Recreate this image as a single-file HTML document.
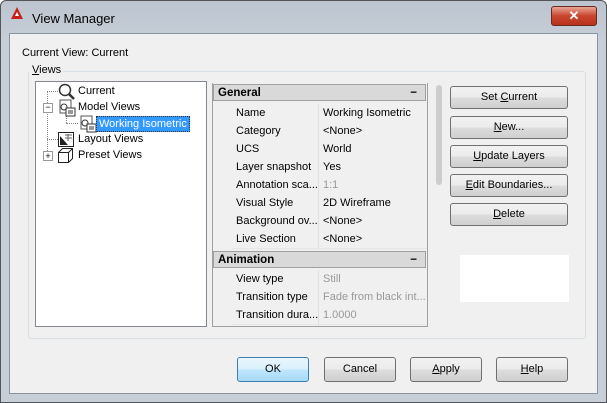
<html><head><style>
body{margin:0;width:607px;height:403px;background:#fff;font-family:"Liberation Sans",sans-serif;font-size:11px;color:#000;position:relative;overflow:hidden}
.a{position:absolute}
.btn{position:absolute;border:1px solid #707070;border-radius:3px;background:linear-gradient(#f2f2f2,#ebebeb 50%,#dddddd 51%,#cfcfcf);text-align:center;line-height:21px;font-size:11px}
.row{position:absolute;left:232px;width:195px;height:18px;border-bottom:1px solid #e6e6e6;background:#f0f0f0}
.row span{position:absolute;top:3px}
.hd{position:absolute;left:213px;width:213px;height:17px;background:#d9d9d9;border:1px solid #a0a0a0;font-weight:bold;font-size:11.5px;line-height:17px;padding-left:4px;box-sizing:border-box}
.hd b{position:absolute;right:8px;top:0}
</style></head><body>
<div class="a" style="left:0;top:0;width:607px;height:403px;background:linear-gradient(#bcc4cf,#c6ced8 40px,#c6ced8);border-radius:6px 6px 0 0;border:1px solid #555;box-sizing:border-box"></div>
<div class="a" style="left:10px;top:6px;width:14px;height:14px"><svg width="14" height="14"><polygon points="7,1 13,13 1,13" fill="#c8211c"/><polygon points="7,6 9,10 5,10" fill="#fff"/></svg></div>
<div class="a" style="left:32px;top:11px;font-size:13px">View Manager</div>
<div class="a" style="left:551px;top:6px;width:44px;height:18px;border-radius:3px;border:1px solid #6a2a20;background:linear-gradient(#e9a594,#c9452e 50%,#b8321c);color:#fff;font-weight:bold;text-align:center;line-height:17px;font-size:13px">✕</div>
<div class="a" style="left:9px;top:33px;width:589px;height:361px;background:#f0f0f0;border:1px solid #8a94a0;box-sizing:border-box"></div>
<div class="a" style="left:22px;top:47px">Current View: Current</div>
<div class="a" style="left:28px;top:71px;width:556px;height:266px;border:1px solid #d5dfe5;border-radius:3px"></div>
<div class="a" style="left:30px;top:64px;background:#f0f0f0;padding:0 2px"><u>V</u>iews</div>
<div class="a" style="left:35px;top:81px;width:172px;height:246px;background:#fff;border:1px solid #828790;box-sizing:border-box"></div>
<div class="a" style="left:47px;top:91px;height:64px;border-left:1px dotted #888"></div>
<div class="a" style="left:47px;top:91px;width:11px;border-top:1px dotted #888"></div>
<div class="a" style="left:47px;top:139px;width:11px;border-top:1px dotted #888"></div>
<div class="a" style="left:66px;top:113px;height:10px;border-left:1px dotted #888"></div>
<div class="a" style="left:66px;top:123px;width:12px;border-top:1px dotted #888"></div>
<div class="a" style="left:43px;top:103px;width:8px;height:8px;border:1px solid #999;background:#fff;font-size:9px;line-height:7px;text-align:center">−</div>
<div class="a" style="left:43px;top:151px;width:8px;height:8px;border:1px solid #999;background:#fff;font-size:9px;line-height:8px;text-align:center">+</div>
<svg class="a" style="left:57px;top:83px" width="20" height="18"><circle cx="8" cy="7" r="5.5" fill="#fff" stroke="#333" stroke-width="1.5"/><line x1="12" y1="11" x2="17" y2="16" stroke="#333" stroke-width="2.5"/></svg>
<svg class="a" style="left:57px;top:99px" width="20" height="18"><rect x="3" y="1" width="11" height="13" fill="#fff" stroke="#555"/><circle cx="7" cy="8" r="3" fill="none" stroke="#333"/><rect x="9" y="9" width="9" height="8" fill="#fff" stroke="#333"/><line x1="11" y1="12" x2="16" y2="12" stroke="#333"/><line x1="11" y1="14" x2="16" y2="14" stroke="#333"/></svg>
<svg class="a" style="left:78px;top:115px" width="20" height="18"><rect x="3" y="1" width="11" height="13" fill="#fff" stroke="#555"/><circle cx="7" cy="8" r="3" fill="none" stroke="#333"/><rect x="9" y="9" width="9" height="8" fill="#fff" stroke="#333"/><line x1="11" y1="12" x2="16" y2="12" stroke="#333"/><line x1="11" y1="14" x2="16" y2="14" stroke="#333"/></svg>
<svg class="a" style="left:57px;top:131px" width="20" height="18"><rect x="1.5" y="1.5" width="15" height="14" fill="#fff" stroke="#222"/><polygon points="3,14 3,5 11,14" fill="#222"/><line x1="8" y1="4" x2="15" y2="4" stroke="#666"/><line x1="8" y1="7" x2="15" y2="7" stroke="#666"/><line x1="11" y1="3" x2="11" y2="10" stroke="#666"/></svg>
<svg class="a" style="left:57px;top:147px" width="20" height="18"><rect x="1.5" y="5.5" width="10" height="10" fill="#fff" stroke="#222"/><polyline points="1.5,5.5 5.5,1.5 15.5,1.5 15.5,11.5 11.5,15.5" fill="none" stroke="#222"/><line x1="11.5" y1="5.5" x2="15.5" y2="1.5" stroke="#222"/></svg>
<div class="a" style="left:78px;top:85px">Current</div>
<div class="a" style="left:78px;top:101px">Model Views</div>
<div class="a" style="left:96px;top:116px;background:#3399ff;color:#fff;padding:1px 2px;border:1px dotted #333">Working Isometric</div>
<div class="a" style="left:78px;top:133px">Layout Views</div>
<div class="a" style="left:78px;top:149px">Preset Views</div>
<div class="a" style="left:212px;top:83px;width:216px;height:244px;background:#f0f0f0;border:1px solid #a0a0a0;border-top:none;box-sizing:border-box"></div>
<div class="hd" style="top:84px">General<b>−</b></div>
<div class="row" style="top:104px"><span style="left:4px">Name</span><span style="left:91px">Working Isometric</span></div>
<div class="row" style="top:122px"><span style="left:4px">Category</span><span style="left:91px">&lt;None&gt;</span></div>
<div class="row" style="top:140px"><span style="left:4px">UCS</span><span style="left:91px">World</span></div>
<div class="row" style="top:158px"><span style="left:4px">Layer snapshot</span><span style="left:91px">Yes</span></div>
<div class="row" style="top:176px"><span style="left:4px">Annotation sca...</span><span style="left:91px;color:#999">1:1</span></div>
<div class="row" style="top:194px"><span style="left:4px">Visual Style</span><span style="left:91px">2D Wireframe</span></div>
<div class="row" style="top:212px"><span style="left:4px">Background ov...</span><span style="left:91px">&lt;None&gt;</span></div>
<div class="row" style="top:230px"><span style="left:4px">Live Section</span><span style="left:91px">&lt;None&gt;</span></div>
<div class="hd" style="top:251px">Animation<b>−</b></div>
<div class="row" style="top:270px"><span style="left:4px">View type</span><span style="left:91px;color:#999">Still</span></div>
<div class="row" style="top:288px"><span style="left:4px">Transition type</span><span style="left:91px;color:#999">Fade from black int...</span></div>
<div class="row" style="top:306px"><span style="left:4px">Transition dura...</span><span style="left:91px;color:#999">1.0000</span></div>
<div class="a" style="left:318px;top:104px;height:144px;border-left:1px solid #e0e0e0"></div>
<div class="a" style="left:318px;top:270px;height:56px;border-left:1px solid #e0e0e0"></div>
<div class="a" style="left:436px;top:85px;width:6px;height:100px;background:#cdcdcd;border-radius:3px"></div>
<div class="btn" style="left:450px;top:86px;width:116px">Set <u>C</u>urrent</div>
<div class="btn" style="left:450px;top:116px;width:116px"><u>N</u>ew...</div>
<div class="btn" style="left:450px;top:145px;width:116px"><u>U</u>pdate Layers</div>
<div class="btn" style="left:450px;top:174px;width:116px"><u>E</u>dit Boundaries...</div>
<div class="btn" style="left:450px;top:203px;width:116px"><u>D</u>elete</div>
<div class="a" style="left:460px;top:255px;width:109px;height:47px;background:#fff"></div>
<div class="btn" style="left:237px;top:357px;width:70px;border:1px solid #3c7fb1;background:linear-gradient(#eaf6fd,#d9f0fc 50%,#bee6fd 51%,#a7d9f5);line-height:23px">OK</div>
<div class="btn" style="left:324px;top:357px;width:70px;line-height:23px">Cancel</div>
<div class="btn" style="left:410px;top:357px;width:70px;line-height:23px"><u>A</u>pply</div>
<div class="btn" style="left:496px;top:357px;width:70px;line-height:23px"><u>H</u>elp</div>
</body></html>
